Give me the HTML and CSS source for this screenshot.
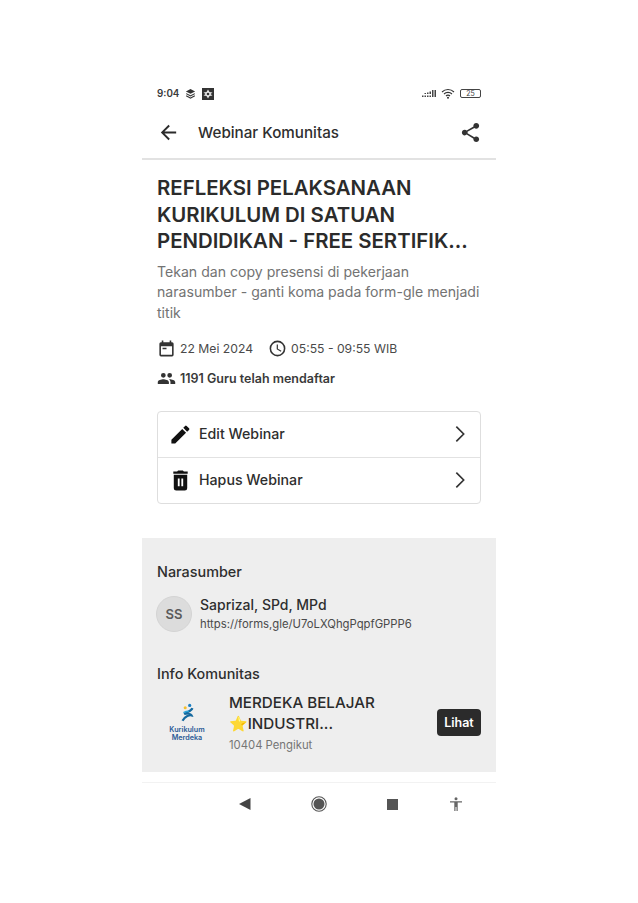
FILE: index.html
```html
<!DOCTYPE html>
<html lang="id">
<head>
<meta charset="utf-8">
<title>Webinar Komunitas</title>
<link rel="stylesheet" href="styles.css">
</head>
<body>
<main class="phone">
  <div class="status">
    <div class="status-side">
      <span class="clock">9:04</span>
      <svg class="st-layers" viewBox="0 0 12 12"><path d="M6 1 11 3.700 6 6.400 1 3.700z M1.600 5.600 6 8 10.400 5.600 11 6.600 6 9.300 1 6.600z M1.600 8 6 10.400 10.400 8 11 9 6 11.600 1 9z" fill="#333"/></svg>
      <svg class="st-app" viewBox="0 0 12 12"><rect width="12" height="12" fill="#333"/><path d="M6 1.500 7.500 4 10.500 4.500 8.500 6 10.500 7.500 7.500 8 6 10.500 4.500 8 1.500 7.500 3.500 6 1.500 4.500 4.500 4z" fill="#e8e8e8"/><circle cx="6" cy="6" r="1.300" fill="#333"/></svg>
    </div>
    <div class="status-side">
      <svg class="st-signal" viewBox="0 0 14 9"><path d="M0 6.500h1.500V8H0zM2.500 6.500H4V8H2.500zM5 6.500h1.500V8H5zM7.500 6.500H9V8H7.500zM10 1h1.500v7H10zM12.500 1H14v7h-1.500zM5 3.500h1.500V5H5zM7.500 2.500H9V5H7.500zM2.500 4H4v1H2.500z" fill="#444"/></svg>
      <svg class="st-wifi" viewBox="0 0 14 11"><path d="M1 4a8.500 8.500 0 0 1 12 0M3 6a5.700 5.700 0 0 1 8 0M5 8a2.800 2.800 0 0 1 4 0" fill="none" stroke="#333" stroke-width="1.100"/><circle cx="7" cy="9.800" r="1" fill="#333"/></svg>
      <span class="battery">25</span>
    </div>
  </div>

  <header class="appbar">
    <svg class="icon-back" viewBox="0 0 24 24"><path d="M20 11H7.800l5.600-5.600L12 4l-8 8 8 8 1.400-1.400L7.800 13H20z" fill="#2b2b2b"/></svg>
    <h1 class="appbar-title">Webinar Komunitas</h1>
    <svg class="icon-share" viewBox="0 0 24 24"><path d="M18 16.100c-.8 0-1.500.3-2 .8l-7.100-4.200c.1-.2.100-.5.100-.7s0-.5-.1-.7L16 7.200c.5.500 1.200.8 2 .8 1.700 0 3-1.300 3-3s-1.300-3-3-3-3 1.300-3 3c0 .2 0 .5.100.7L8 9.800C7.500 9.300 6.800 9 6 9c-1.700 0-3 1.300-3 3s1.300 3 3 3c.8 0 1.500-.3 2-.8l7.100 4.200c-.1.200-.1.400-.1.600 0 1.600 1.300 2.900 3 2.900s3-1.300 3-2.900-1.300-2.900-3-2.900z" fill="#333"/></svg>
  </header>

  <section class="detail">
    <h2 class="title">REFLEKSI PELAKSANAAN KURIKULUM DI SATUAN PENDIDIKAN - FREE SERTIFIK...</h2>
    <p class="desc">Tekan dan copy presensi di pekerjaan narasumber - ganti koma pada form-gle menjadi titik</p>
    <div class="meta">
      <span class="meta-item">
        <svg class="icon-meta" viewBox="0 0 24 24"><path d="M19 4h-1V2h-2v2H8V2H6v2H5a2 2 0 0 0-2 2v14a2 2 0 0 0 2 2h14a2 2 0 0 0 2-2V6a2 2 0 0 0-2-2zm0 16H5V9h14zM7 11h5v2H7z" fill="#333"/></svg>
        22 Mei 2024
      </span>
      <span class="meta-item">
        <svg class="icon-meta" viewBox="0 0 24 24"><path d="M12 2a10 10 0 1 0 0 20 10 10 0 0 0 0-20zm0 18a8 8 0 1 1 0-16 8 8 0 0 1 0 16zm.5-13H11v6l5.200 3.200.8-1.300-4.500-2.700z" fill="#333"/></svg>
        05:55 - 09:55 WIB
      </span>
    </div>
    <div class="registered">
      <svg class="icon-people" viewBox="0 0 24 24"><path d="M16 11a3 3 0 1 0 0-6 3 3 0 0 0 0 6zm-8 0a3 3 0 1 0 0-6 3 3 0 0 0 0 6zm0 2c-2.300 0-7 1.200-7 3.500V19h14v-2.500C15 14.200 10.300 13 8 13zm8 0h-1c1.200.8 2 1.900 2 3.500V19h6v-2.500c0-2.300-4.700-3.500-7-3.500z" fill="#333"/></svg>
      1191 Guru telah mendaftar
    </div>
    <div class="actions">
      <div class="action">
        <svg class="icon-action" viewBox="0 0 24 24"><path d="M2.500 17.500V21.500h4L17.800 10.200l-4-4zM20.900 7.200a1.100 1.100 0 0 0 0-1.600l-2.500-2.500a1.100 1.100 0 0 0-1.600 0l-1.900 1.900 4 4z" fill="#111"/></svg>
        <span class="action-label">Edit Webinar</span>
        <svg class="icon-chev" viewBox="0 0 24 24"><path d="M8 4l8 8-8 8" fill="none" stroke="#333" stroke-width="1.800"/></svg>
      </div>
      <div class="action">
        <svg class="icon-action" viewBox="0 0 24 24"><path fill-rule="evenodd" d="M15.500 2.500l-1-1h-5l-1 1H4.500v2.500h15V2.500zM5 6v14a2.500 2.500 0 0 0 2.500 2.500h9A2.500 2.500 0 0 0 19 20V6zm4.200 4h1.900v8H9.200zm3.700 0h1.900v8h-1.900z" fill="#111"/></svg>
        <span class="action-label">Hapus Webinar</span>
        <svg class="icon-chev" viewBox="0 0 24 24"><path d="M8 4l8 8-8 8" fill="none" stroke="#333" stroke-width="1.800"/></svg>
      </div>
    </div>
  </section>

  <section class="info">
    <h3 class="info-head">Narasumber</h3>
    <div class="speaker">
      <div class="avatar">SS</div>
      <div class="speaker-text">
        <div class="speaker-name">Saprizal, SPd, MPd</div>
        <div class="speaker-link">https://forms,gle/U7oLXQhgPqpfGPPP6</div>
      </div>
    </div>
    <h3 class="info-head info-head-second">Info Komunitas</h3>
    <div class="community">
      <div class="logo">
        <svg class="logo-mark" viewBox="0 0 20 24"><circle cx="13" cy="2.500" r="1.800" fill="#1b7fc4"/><circle cx="8" cy="5" r="1.700" fill="#f5c02c"/><path d="M16 5.500C15 9 10 9.500 7 12c3-.8 7-.5 8 1.500-2-.5-7 .5-10 6" fill="none" stroke="#14699f" stroke-width="2.400"/><path d="M6 10.500C8 9.500 10 9 12 9" fill="none" stroke="#2aa3d8" stroke-width="1.800"/></svg>
        <span class="logo-text">Kurikulum<br>Merdeka</span>
      </div>
      <div class="community-text">
        <div class="community-name">MERDEKA BELAJAR<br><span class="star">⭐</span>INDUSTRI...</div>
        <div class="community-count">10404 Pengikut</div>
      </div>
      <div class="btn">Lihat</div>
    </div>
  </section>

  <nav class="navbar">
    <svg class="nav-back" viewBox="0 0 12 12"><path d="M11.500 0V12L0 6z" fill="#444"/></svg>
    <svg class="nav-home" viewBox="0 0 16 16"><circle cx="8" cy="8" r="7.200" fill="none" stroke="#555" stroke-width="1.100"/><circle cx="8" cy="8" r="5.500" fill="#555"/></svg>
    <span class="nav-square"></span>
    <svg class="nav-access" viewBox="0 0 14 14"><circle cx="7" cy="1.700" r="1.500" fill="#666"/><path d="M1 4.200h12v1.400H8.700V14H7.500v-4h-1v4H5.300V5.600H1z" fill="#666"/></svg>
  </nav>
</main>
</body>
</html>
```

FILE: styles.css
```css
* { box-sizing: border-box; }
html, body { margin: 0; padding: 0; background: #fff; }
body { font-family: Inter, "Liberation Sans", sans-serif; color: #2b2b2b; height: 903px; overflow: hidden; }
h1, h2, h3, p { margin: 0; }
svg { display: block; flex: none; }

.phone { width: 354px; margin: 0 0 0 142px; padding-top: 85px; }

.status { height: 17px; padding: 0 15px; display: flex; justify-content: space-between; align-items: center; }
.status-side { display: flex; align-items: center; gap: 5px; }
.clock { font-size: 9.800px; font-weight: 600; color: #3a3a3a; margin-right: 1px; }
.st-layers { width: 11px; height: 11px; }
.st-app { width: 12px; height: 12px; margin-left: 1px; }
.st-signal { width: 14px; height: 9px; }
.st-wifi { width: 14px; height: 11px; }
.battery { width: 21px; height: 9px; border: 1px solid #444; border-radius: 2px; font-size: 7px; line-height: 7px; text-align: center; color: #444; }

.appbar { height: 58px; padding: 4px 14px 0 15px; display: flex; align-items: center; border-bottom: 2px solid #e2e2e2; }
.icon-back { width: 23px; height: 23px; }
.appbar-title { flex: 1; margin-left: 18px; font-size: 15.200px; font-weight: 500; color: #2e2e2e; }
.icon-share { width: 23px; height: 23px; }

.detail { padding: 15px 15px 0; height: 378px; }
.title { font-size: 20.400px; line-height: 26.500px; font-weight: 600; color: #2b2b2b; }
.desc { margin-top: 7px; font-size: 14.100px; line-height: 20.700px; color: #737373; }
.meta { margin-top: 15px; display: flex; gap: 15px; height: 20px; align-items: center; }
.meta-item { display: flex; align-items: center; gap: 4px; font-size: 12.200px; color: #4a4a4a; }
.icon-meta { width: 19px; height: 19px; }
.registered { margin-top: 10px; height: 20px; display: flex; align-items: center; gap: 4px; font-size: 12.500px; font-weight: 600; color: #3a3a3a; }
.icon-people { width: 19px; height: 19px; }

.actions { margin-top: 22px; border: 1px solid #dedede; border-radius: 4px; }
.action { height: 45.500px; padding: 0 9px 0 11px; display: flex; align-items: center; }
.action + .action { border-top: 1px solid #e2e2e2; }
.icon-action { width: 23px; height: 23px; }
.action-label { flex: 1; margin: 0 0 1px 7px; font-size: 14.200px; font-weight: 500; color: #2e2e2e; }
.icon-chev { width: 22px; height: 22px; }

.info { height: 234px; padding: 25px 15px 0; background: #eeeeee; }
.info-head { font-size: 14.400px; line-height: 18px; font-weight: 500; color: #2e2e2e; }
.info-head-second { margin-top: 32px; }
.speaker { margin-top: 14px; display: flex; align-items: center; height: 38px; margin-left: -1px; }
.avatar { width: 36px; height: 36px; border-radius: 50%; background: #dcdcdc; border: 1px solid #d4d4d4; display: flex; align-items: center; justify-content: center; font-size: 13px; font-weight: 600; color: #5a5a5a; }
.speaker-text { margin-left: 8px; }
.speaker-name { font-size: 14px; line-height: 20px; font-weight: 500; color: #2e2e2e; }
.speaker-link { font-size: 11.300px; line-height: 18px; color: #4a4a4a; }

.community { margin-top: 8.500px; display: flex; align-items: center; }
.logo { width: 60px; display: flex; flex-direction: column; align-items: center; }
.logo-mark { width: 18px; height: 22px; }
.logo-text { margin-top: 1px; font-size: 7.200px; line-height: 7.500px; font-weight: 600; text-align: center; color: #2a5a96; }
.community-text { flex: 1; margin-left: 12px; }
.community-name { font-size: 15.200px; line-height: 21px; font-weight: 500; color: #2b2b2b; }
.star { font-family: "Noto Color Emoji", "DejaVu Sans", sans-serif; color: #f7c325; font-size: 15px; }
.community-count { margin-top: 2.500px; font-size: 11.300px; line-height: 16px; color: #757575; }
.btn { width: 44px; height: 27px; border-radius: 4px; background: #2b2b2b; color: #fff; font-size: 12.500px; font-weight: 600; display: flex; align-items: center; justify-content: center; }

.navbar { position: relative; margin-top: 10px; height: 44px; border-top: 1px solid #f2f2f2; }
.nav-back, .nav-home, .nav-square, .nav-access { position: absolute; }
.nav-back { left: 97px; top: 15px; width: 12px; height: 12px; }
.nav-home { left: 169px; top: 13px; width: 16px; height: 16px; }
.nav-square { left: 245px; top: 16px; width: 11px; height: 11px; background: #555; }
.nav-access { left: 307px; top: 14px; width: 14px; height: 14px; }
```
